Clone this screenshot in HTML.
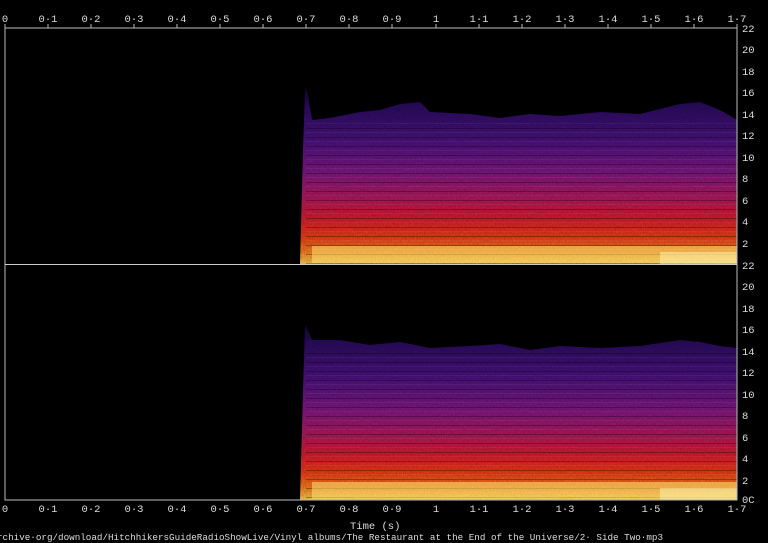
<!DOCTYPE html>
<html><head><meta charset="utf-8"><style>
html,body{margin:0;padding:0;background:#000;width:768px;height:543px;overflow:hidden}
svg{display:block}
text{font-family:"Liberation Mono","DejaVu Sans Mono",monospace;font-size:10.5px;fill:#ddd}
</style></head><body>
<svg width="768" height="543" viewBox="0 0 768 543" xmlns="http://www.w3.org/2000/svg">
<defs>
<linearGradient id="g" x1="0" y1="0" x2="0" y2="1">
<stop offset="0" stop-color="#10052a"/>
<stop offset="0.1" stop-color="#2a0c60"/>
<stop offset="0.3" stop-color="#4c1280"/>
<stop offset="0.48" stop-color="#801884"/>
<stop offset="0.62" stop-color="#b01860"/>
<stop offset="0.74" stop-color="#d81c30"/>
<stop offset="0.85" stop-color="#ee4014"/>
<stop offset="0.93" stop-color="#f68020"/>
<stop offset="1" stop-color="#ffd050"/>
</linearGradient>
<filter id="n" x="0" y="0" width="100%" height="100%">
<feTurbulence type="fractalNoise" baseFrequency="0.9 0.35" numOctaves="2" seed="3"/>
<feColorMatrix values="0 0 0 0 0  0 0 0 0 0  0 0 0 0 0  0 0 0 -1.2 1.1"/>
</filter>
<pattern id="st" width="40" height="9" patternUnits="userSpaceOnUse">
<rect y="2" width="40" height="1" fill="#000" opacity="0.3"/>
<rect y="6" width="40" height="1" fill="#fff" opacity="0.06"/>
</pattern>
</defs>
<!-- channel 1 -->
<polygon fill="url(#g)" points="306,88 308,95 312,120 330,118 360,112 380,110 400,104 420,102 430,112 470,114 500,118 530,114 560,116 600,112 640,114 680,104 700,102 720,110 737,120 737,264 300,264 303,150 305,90"/>
<polygon fill="url(#st)" points="306,120 737,120 737,264 306,264"/>
<rect x="300" y="86" width="437" height="178" filter="url(#n)" opacity="0.25"/>
<rect x="312" y="246" width="425" height="17" fill="#ffe070" opacity="0.55"/>
<rect x="660" y="252" width="77" height="12" fill="#fff4b0" opacity="0.5"/>
<!-- channel 2 -->
<polygon fill="url(#g)" points="306,325 308,330 312,340 340,340 370,345 400,342 430,348 470,346 500,344 530,350 560,346 600,348 640,346 680,340 700,342 720,346 737,348 737,500 300,500 303,390 305,327"/>
<polygon fill="url(#st)" points="306,350 737,350 737,500 306,500"/>
<rect x="300" y="324" width="437" height="176" filter="url(#n)" opacity="0.25"/>
<rect x="312" y="482" width="425" height="17" fill="#ffe070" opacity="0.55"/>
<rect x="660" y="488" width="77" height="12" fill="#fff4b0" opacity="0.5"/>
<!-- axes -->
<rect x="5" y="28" width="732" height="472" fill="none" stroke="#bbb" stroke-width="1"/>
<line x1="5" y1="264.5" x2="737" y2="264.5" stroke="#ccc"/>
<g stroke="#bbb">
<line x1="5" y1="28" x2="5" y2="24"/><line x1="48" y1="28" x2="48" y2="24"/><line x1="91" y1="28" x2="91" y2="24"/><line x1="134" y1="28" x2="134" y2="24"/><line x1="177" y1="28" x2="177" y2="24"/><line x1="220" y1="28" x2="220" y2="24"/><line x1="263" y1="28" x2="263" y2="24"/><line x1="306" y1="28" x2="306" y2="24"/><line x1="349" y1="28" x2="349" y2="24"/><line x1="392" y1="28" x2="392" y2="24"/><line x1="436" y1="28" x2="436" y2="24"/><line x1="479" y1="28" x2="479" y2="24"/><line x1="522" y1="28" x2="522" y2="24"/><line x1="565" y1="28" x2="565" y2="24"/><line x1="608" y1="28" x2="608" y2="24"/><line x1="651" y1="28" x2="651" y2="24"/><line x1="694" y1="28" x2="694" y2="24"/><line x1="737" y1="28" x2="737" y2="24"/>
</g>
<g text-anchor="middle">
<text x="5" y="22">0</text><text x="48" y="22">0·1</text><text x="91" y="22">0·2</text><text x="134" y="22">0·3</text><text x="177" y="22">0·4</text><text x="220" y="22">0·5</text><text x="263" y="22">0·6</text><text x="306" y="22">0·7</text><text x="349" y="22">0·8</text><text x="392" y="22">0·9</text><text x="436" y="22">1</text><text x="479" y="22">1·1</text><text x="522" y="22">1·2</text><text x="565" y="22">1·3</text><text x="608" y="22">1·4</text><text x="651" y="22">1·5</text><text x="694" y="22">1·6</text><text x="737" y="22">1·7</text>
<text x="5" y="512">0</text><text x="48" y="512">0·1</text><text x="91" y="512">0·2</text><text x="134" y="512">0·3</text><text x="177" y="512">0·4</text><text x="220" y="512">0·5</text><text x="263" y="512">0·6</text><text x="306" y="512">0·7</text><text x="349" y="512">0·8</text><text x="392" y="512">0·9</text><text x="436" y="512">1</text><text x="479" y="512">1·1</text><text x="522" y="512">1·2</text><text x="565" y="512">1·3</text><text x="608" y="512">1·4</text><text x="651" y="512">1·5</text><text x="694" y="512">1·6</text><text x="737" y="512">1·7</text>
</g>
<g>
<text x="742" y="32">22</text><text x="742" y="53">20</text><text x="742" y="75">18</text><text x="742" y="96">16</text><text x="742" y="118">14</text><text x="742" y="139">12</text><text x="742" y="161">10</text><text x="742" y="182">8</text><text x="742" y="204">6</text><text x="742" y="225">4</text><text x="742" y="247">2</text>
<text x="742" y="269">22</text><text x="742" y="290">20</text><text x="742" y="312">18</text><text x="742" y="333">16</text><text x="742" y="355">14</text><text x="742" y="376">12</text><text x="742" y="398">10</text><text x="742" y="419">8</text><text x="742" y="441">6</text><text x="742" y="462">4</text><text x="742" y="484">2</text><text x="742" y="503">0C</text>
</g>
<text x="350" y="529">Time (s)</text>
<text x="-3" y="540" style="font-size:9px" textLength="666" lengthAdjust="spacingAndGlyphs">rchive·org/download/HitchhikersGuideRadioShowLive/Vinyl albums/The Restaurant at the End of the Universe/2· Side Two·mp3</text>
</svg>
</body></html>
